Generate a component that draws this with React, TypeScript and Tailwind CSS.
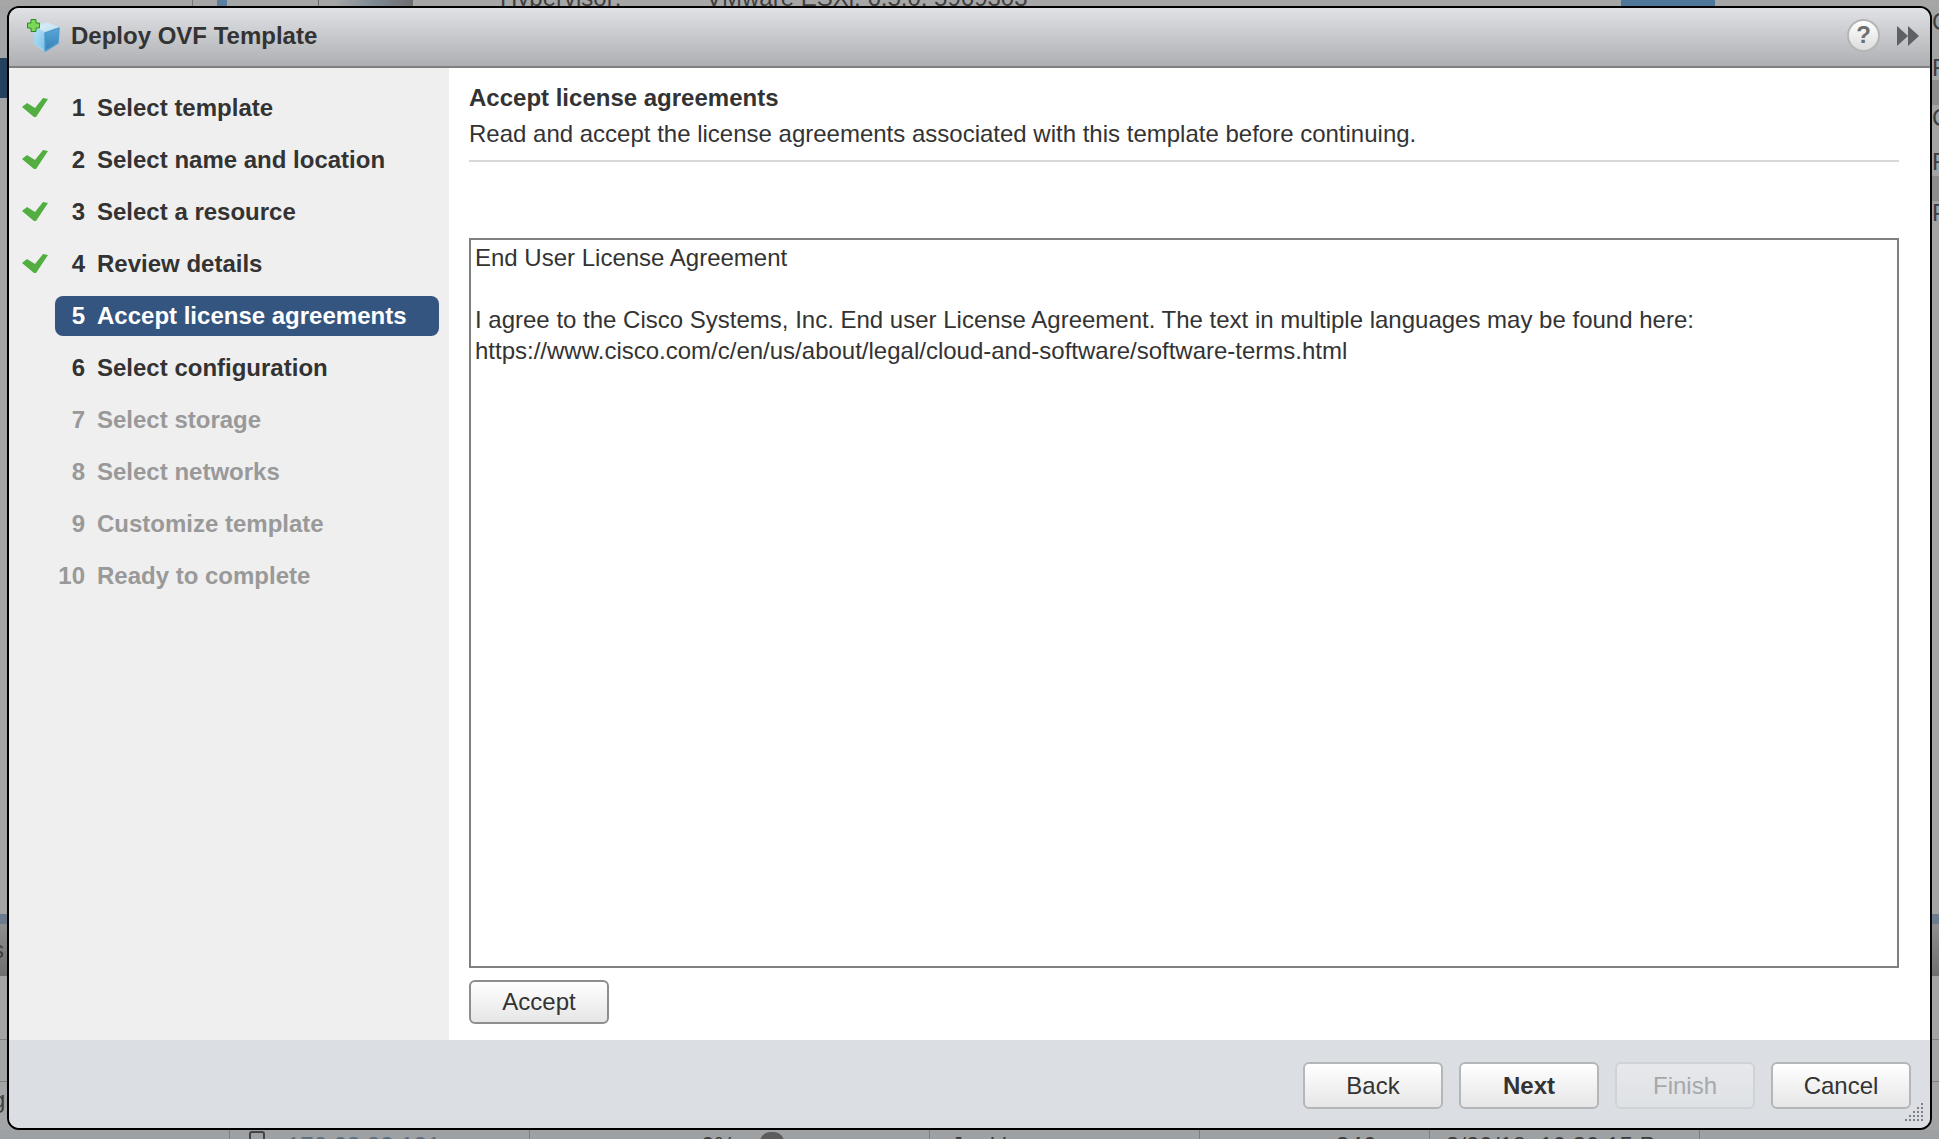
import React from 'react';

const steps = [
  { n: 1, label: 'Select template', state: 'done' },
  { n: 2, label: 'Select name and location', state: 'done' },
  { n: 3, label: 'Select a resource', state: 'done' },
  { n: 4, label: 'Review details', state: 'done' },
  { n: 5, label: 'Accept license agreements', state: 'active' },
  { n: 6, label: 'Select configuration', state: 'next' },
  { n: 7, label: 'Select storage', state: 'disabled' },
  { n: 8, label: 'Select networks', state: 'disabled' },
  { n: 9, label: 'Customize template', state: 'disabled' },
  { n: 10, label: 'Ready to complete', state: 'disabled' },
];

const CheckMark = () => (
  <svg width="26" height="20" viewBox="0 0 26 20">
    <path d="M0 9 L5 5 L13 10 L21 0 L26 1 L14 19 L12 19 Z" fill="#52ae40" />
  </svg>
);

const DeployIcon = () => (
  <svg width="34" height="34" viewBox="0 0 34 34">
    <defs>
      <linearGradient id="cubeTop" x1="0" y1="0" x2="1" y2="1">
        <stop offset="0" stopColor="#e6f4fb" />
        <stop offset="1" stopColor="#b4dcf1" />
      </linearGradient>
      <linearGradient id="cubeLeft" x1="0" y1="0" x2="1" y2="1">
        <stop offset="0" stopColor="#bfe5f8" />
        <stop offset="1" stopColor="#74bfe8" />
      </linearGradient>
      <linearGradient id="cubeRight" x1="0" y1="0" x2="0" y2="1">
        <stop offset="0" stopColor="#5aa8d8" />
        <stop offset="1" stopColor="#347fb6" />
      </linearGradient>
    </defs>
    <g strokeLinejoin="round" strokeWidth="1.5">
      <path d="M6 8 L20 4 L32 9 L18 14 Z" fill="url(#cubeTop)" stroke="#cbe6f5" />
      <path d="M6 8 L18 14 L18 32 L8 25 Z" fill="url(#cubeLeft)" stroke="#a5d6f0" />
      <path d="M18 14 L32 9 L31 24 L18 32 Z" fill="url(#cubeRight)" stroke="#4d9bcd" />
    </g>
    <path d="M4 0.5 H9 V4 H12.5 V9 H9 V12.5 H4 V9 H0.5 V4 H4 Z" fill="#7bd957" stroke="#2f8a2a" strokeWidth="1" />
  </svg>
);

const ResizeGrip = () => (
  <svg width="20" height="20" viewBox="0 0 20 20" fill="#7d8084">
    {[
      [16, 1], [16, 5], [12, 5], [16, 9], [12, 9], [8, 9], [16, 13], [12, 13], [8, 13], [4, 13],
      [16, 17], [12, 17], [8, 17], [4, 17], [0, 17],
    ].map(([x, y]) => (
      <rect key={`${x}-${y}`} x={x} y={y} width="2" height="2" />
    ))}
  </svg>
);

const Button = ({ label, bold, disabled, dark }: { label: string; bold?: boolean; disabled?: boolean; dark?: boolean }) => (
  <button
    className={`w-[140px] rounded-[6px] border-2 text-[24px] leading-none bg-gradient-to-b ${
      dark ? 'h-[44px] border-[#8e8e8e]' : 'h-[47px] border-[#b4b6b9]'
    } ${bold ? 'font-bold' : ''} ${
      disabled
        ? 'border-[#cfd2d6] from-[#e6e8eb] to-[#dfe2e5] text-[#a6a8ab]'
        : 'from-white to-[#e6e6e6] text-[#333333]'
    }`}
  >
    {label}
  </button>
);

// the vSphere page behind the modal, only its edges show
const TopEdge = () => (
  <div className="col-span-3 flex h-[6px] overflow-hidden whitespace-nowrap bg-[#a6a6a6] text-[24px] leading-none text-[#3e3e3e]">
    <div className="ml-[192px] w-[1px] bg-[#777777]" />
    <div className="ml-[24px] w-[10px] bg-[#5b7f9f]" />
    <div className="ml-[91px] w-[1px] bg-[#666666]" />
    <div className="ml-[14px] w-[80px] bg-gradient-to-r from-[#a6a6a6] via-[#7f8a94] to-[#6d6d6f]" />
    <div className="ml-[87px] -mt-[14px] w-[206px] shrink-0">Hypervisor:</div>
    <div className="-mt-[14px] w-[915px] shrink-0">VMware ESXi, 6.5.0, 5969303</div>
    <div className="w-[94px] bg-[#4f7799]" />
  </div>
);

const LeftEdge = () => (
  <div className="flex flex-col overflow-hidden bg-[#a3a4a5] text-[24px] leading-none text-[#3e3e3e]">
    <div className="mt-[52px] h-[40px] shrink-0 bg-[#24405f]" />
    <div className="mt-[816px] h-[10px] shrink-0 bg-[#6d7b8f]" />
    <div className="h-[52px] shrink-0 bg-gradient-to-b from-[#8f8f8f] to-[#6f6f6f] -indent-[8px] pt-[14px]">s</div>
    <div className="mt-[63px] h-[1px] shrink-0 bg-[#808080]" />
    <div className="mt-[41px] h-[1px] shrink-0 bg-[#808080]" />
    <div className="mt-[6px] -indent-[8px]">g</div>
  </div>
);

const RightEdge = () => (
  <div className="flex flex-col overflow-hidden bg-[#a3a4a5] text-[24px] leading-none text-[#3e3e3e]">
    <div className="mt-[4px] h-[24px] shrink-0">C</div>
    <div className="mt-[22px] h-[24px] shrink-0">F</div>
    <div className="h-[25px] shrink-0 bg-[#8c8c8c]" />
    <div className="mt-[1px] h-[24px] shrink-0">C</div>
    <div className="mt-[20px] h-[24px] shrink-0">F</div>
    <div className="mt-[2px] h-[25px] shrink-0 bg-[#8c8c8c]" />
    <div className="h-[24px] shrink-0">P</div>
    <div className="mt-[689px] h-[10px] shrink-0 bg-[#6d7b8f]" />
    <div className="h-[52px] shrink-0 bg-gradient-to-b from-[#8f8f8f] to-[#6f6f6f]" />
    <div className="mt-[63px] h-[1px] shrink-0 bg-[#808080]" />
    <div className="mt-[41px] h-[1px] shrink-0 bg-[#808080]" />
  </div>
);

const BottomEdge = () => (
  <div className="col-span-3 flex h-[9px] overflow-hidden whitespace-nowrap bg-[#9ea1a3] text-[24px] leading-none text-[#3e3e3e]">
    <div className="w-[229px] shrink-0" />
    <div className="flex w-[300px] shrink-0 border-l border-[#7e7e7e] pl-[19px]">
      <div className="mt-[1px] h-[16px] w-[16px] shrink-0 rounded-[3px] border-2 border-[#444444]" />
      <div className="ml-[22px] mt-[4px] text-[#5c6f80]">172.23.33.131</div>
    </div>
    <div className="flex w-[400px] shrink-0 border-l border-[#7e7e7e] pl-[171px]">
      <div className="mt-[4px] w-[59px] shrink-0">0%</div>
      <div className="mt-[2px] h-[20px] w-[24px] rounded-full bg-[#5c5c5c]" />
    </div>
    <div className="w-[270px] shrink-0 border-l border-[#7e7e7e] pl-[21px] pt-[4px]">Jenkins</div>
    <div className="w-[230px] shrink-0 border-l border-[#7e7e7e] pl-[136px] pt-[4px]">346</div>
    <div className="w-[270px] shrink-0 border-l border-[#7e7e7e] pl-[16px] pt-[4px]">3/20/18, 10:30:15 P</div>
    <div className="flex-1 border-l border-[#7e7e7e]" />
  </div>
);

export default function App() {
  return (
    <div className="grid h-[1139px] w-[1939px] grid-cols-[7px_1925px_7px] grid-rows-[6px_1124px_9px] overflow-hidden bg-[#a3a4a5] font-['Liberation_Sans',Arial,sans-serif]">
      <TopEdge />
      <LeftEdge />

      <div className="flex min-h-0 flex-col overflow-hidden rounded-[12px] border-2 border-black bg-[#dbdee2]">
        <div className="flex h-[60px] shrink-0 items-center border-b-2 border-[#7f7f7f] bg-gradient-to-b from-[#e1e2e5] to-[#aeafb2] pb-[3px] pl-[18px] pr-[11px]">
          <DeployIcon />
          <span className="ml-[10px] text-[24px] font-bold text-[#333333]">Deploy OVF Template</span>
          <div className="-mt-[1px] ml-auto flex h-[33px] w-[33px] items-center justify-center rounded-full border-2 border-[#b5b5b5] bg-gradient-to-b from-white to-[#dddddd] text-[24px] font-bold text-[#6e6e6e]">
            ?
          </div>
          <svg className="ml-[17px]" width="22" height="20" viewBox="0 0 22 20" fill="#5f6063">
            <path d="M0 0 L11 10 L0 20 Z" />
            <path d="M11 0 L22 10 L11 20 Z" />
          </svg>
        </div>

        <div className="flex min-h-0 flex-1">
          <div className="w-[440px] shrink-0 bg-[#efefef] pt-[14px]">
            {steps.map(step => (
              <div key={step.n} className="flex h-[52px] items-center">
                <div className="flex w-[46px] pl-[13px]">{step.state === 'done' && <CheckMark />}</div>
                <div
                  className={`flex h-[40px] w-[384px] items-center rounded-[8px] text-[24px] font-bold ${
                    step.state === 'active'
                      ? 'bg-[#34557f] text-white'
                      : step.state === 'disabled'
                        ? 'text-[#999999]'
                        : 'text-[#333333]'
                  }`}
                >
                  <span className="w-[30px] text-right">{step.n}</span>
                  <span className="ml-[12px]">{step.label}</span>
                </div>
              </div>
            ))}
          </div>

          <div className="flex min-w-0 flex-1 flex-col bg-white pl-[20px] pr-[31px] pt-[15px] text-[#333333]">
            <div className="h-[30px] text-[24px] font-bold leading-[30px]">Accept license agreements</div>
            <div className="mt-[6px] h-[30px] text-[24px] leading-[30px]">
              Read and accept the license agreements associated with this template before continuing.
            </div>
            <div className="mt-[11px] h-[2px] bg-[#d8d8d8]" />
            <div className="mt-[76px] h-[730px] border-2 border-[#808080] px-[4px] pt-[2px] text-[24px] leading-[31px]">
              <div>End User License Agreement</div>
              <div className="mt-[31px]">
                I agree to the Cisco Systems, Inc. End user License Agreement. The text in multiple languages may be found here:
              </div>
              <div>https://www.cisco.com/c/en/us/about/legal/cloud-and-software/software-terms.html</div>
            </div>
            <div className="mt-[12px]">
              <Button label="Accept" dark />
            </div>
          </div>
        </div>

        <div className="relative flex h-[88px] shrink-0 justify-end gap-[16px] bg-[#dbdee2] pr-[19px] pt-[22px]">
          <Button label="Back" />
          <Button label="Next" bold />
          <Button label="Finish" disabled />
          <Button label="Cancel" />
          <div className="absolute bottom-[6px] right-[5px]">
            <ResizeGrip />
          </div>
        </div>
      </div>

      <RightEdge />
      <BottomEdge />
    </div>
  );
}
